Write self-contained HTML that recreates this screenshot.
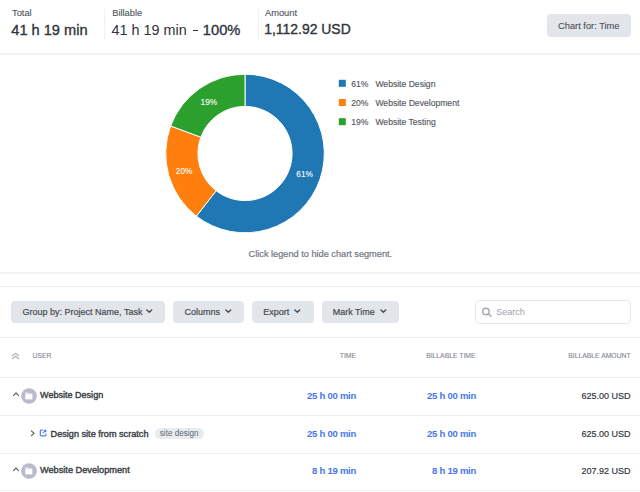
<!DOCTYPE html>
<html><head><meta charset="utf-8">
<style>
html,body{margin:0;padding:0;background:#fff;}
body{width:640px;height:492px;position:relative;overflow:hidden;font-family:"Liberation Sans",sans-serif;color:#3b3f46;}
.a{position:absolute;white-space:nowrap;line-height:1;}
.ic{position:absolute;}
.hl{position:absolute;left:0;width:640px;height:1px;background:#eceef1;}
.vl{position:absolute;width:1px;background:#eff1f4;}
.lbl{font-size:9.3px;color:#555a62;-webkit-text-stroke:0.15px currentColor;}
.val{font-size:14.4px;color:#2f333a;}
.sb{-webkit-text-stroke:0.35px currentColor;}
.btn{position:absolute;top:300.5px;height:22.5px;background:#e2e6ea;border-radius:4px;}
.bt{font-size:9px;color:#454a52;top:307.6px;-webkit-text-stroke:0.2px currentColor;}
.th{font-size:6.8px;color:#848990;top:352.8px;-webkit-text-stroke:0.12px currentColor;}
.blue{color:#4677ea;font-size:9.5px;font-weight:bold;letter-spacing:-0.25px;}
.amt{font-size:9px;color:#33373e;-webkit-text-stroke:0.18px currentColor;}
.name{font-size:9.05px;color:#3b3f46;-webkit-text-stroke:0.4px currentColor;}
</style></head>
<body>
<!-- header -->
<div class="a lbl" style="left:12px;top:8.7px;">Total</div>
<div class="a val sb" style="left:11.3px;top:22.5px;font-size:14.6px;">41 h 19 min</div>
<div class="vl" style="left:104px;top:8.5px;height:32px;"></div>
<div class="a lbl" style="left:112.2px;top:8.7px;">Billable</div>
<div class="a val" style="left:111.6px;top:22.6px;">41 h 19 min</div>
<div style="position:absolute;left:192.6px;top:29.7px;width:5.2px;height:1.6px;background:#2f333a;"></div>
<div class="a val sb" style="left:202.8px;top:22.6px;font-size:14.7px;">100%</div>
<div class="vl" style="left:257.5px;top:8.5px;height:32px;"></div>
<div class="a lbl" style="left:265px;top:8.7px;">Amount</div>
<div class="a val sb" style="left:264.2px;top:22.8px;font-size:13.95px;">1,112.92 USD</div>
<div class="btn" style="left:547px;top:13.5px;width:84px;height:23.5px;"></div>
<div class="a bt" style="left:558px;top:21.8px;font-size:9.3px;-webkit-text-stroke:0.1px currentColor;color:#4a4f57;">Chart for: Time</div>
<div class="hl" style="top:53px;height:2px;background:#f1f2f5;"></div>

<!-- chart -->
<svg style="position:absolute;left:0;top:0" width="640" height="270" viewBox="0 0 640 270">
  <path d="M245.00 74.20A79.3 79.3 0 1 1 196.40 216.16L216.13 190.72A47.1 47.1 0 1 0 245.00 106.40Z" fill="#1f77b4" stroke="#fff" stroke-width="1"/>
  <path d="M196.40 216.16A79.3 79.3 0 0 1 170.63 125.99L200.83 137.16A47.1 47.1 0 0 0 216.13 190.72Z" fill="#ff7f0e" stroke="#fff" stroke-width="1"/>
  <path d="M170.63 125.99A79.3 79.3 0 0 1 245.00 74.20L245.00 106.40A47.1 47.1 0 0 0 200.83 137.16Z" fill="#2ca02c" stroke="#fff" stroke-width="1"/>
  <g font-family="Liberation Sans" font-size="9" fill="#fff" stroke="#fff" stroke-width="0.1" text-anchor="middle">
    <text transform="translate(304.6 177.3) scale(0.92 1.1)">61%</text>
    <text transform="translate(184.1 174.1) scale(0.92 1.1)">20%</text>
    <text transform="translate(208.8 105.4) scale(0.92 1.1)">19%</text>
  </g>
  <rect x="338.8" y="79.8" width="7" height="7" fill="#1f77b4"/>
  <rect x="338.8" y="99" width="7" height="7" fill="#ff7f0e"/>
  <rect x="338.8" y="118.2" width="7" height="7" fill="#2ca02c"/>
  <g font-family="Liberation Sans" font-size="8.6" fill="#555a62" stroke="#555a62" stroke-width="0.15">
    <text x="368.5" y="86.7" text-anchor="end">61%</text>
    <text x="375.4" y="86.7">Website Design</text>
    <text x="368.5" y="105.9" text-anchor="end">20%</text>
    <text x="375.4" y="105.9">Website Development</text>
    <text x="368.5" y="125.1" text-anchor="end">19%</text>
    <text x="375.4" y="125.1">Website Testing</text>
  </g>
  <text x="248.6" y="256.7" font-family="Liberation Sans" font-size="9.2" fill="#71767d" stroke="#71767d" stroke-width="0.2">Click legend to hide chart segment.</text>
</svg>
<div class="hl" style="top:272px;height:2px;background:#f3f4f6;"></div>
<div class="hl" style="top:286px;"></div>

<!-- toolbar -->
<div class="btn" style="left:11.25px;width:153.75px;"></div>
<div class="a bt" style="left:22.5px;">Group by: Project Name, Task</div>
<svg class="ic" style="left:145.5px;top:309px" width="7" height="5" viewBox="0 0 7 5"><polyline points="0.9,1 3.3,3.3 5.7,1" fill="none" stroke="#454a52" stroke-width="1.4" stroke-linecap="round" stroke-linejoin="round"/></svg>
<div class="btn" style="left:173px;width:71px;"></div>
<div class="a bt" style="left:184.4px;">Columns</div>
<svg class="ic" style="left:225px;top:309px" width="7" height="5" viewBox="0 0 7 5"><polyline points="0.9,1 3.3,3.3 5.7,1" fill="none" stroke="#454a52" stroke-width="1.4" stroke-linecap="round" stroke-linejoin="round"/></svg>
<div class="btn" style="left:252.3px;width:61.5px;"></div>
<div class="a bt" style="left:263.3px;">Export</div>
<svg class="ic" style="left:294.3px;top:309px" width="7" height="5" viewBox="0 0 7 5"><polyline points="0.9,1 3.3,3.3 5.7,1" fill="none" stroke="#454a52" stroke-width="1.4" stroke-linecap="round" stroke-linejoin="round"/></svg>
<div class="btn" style="left:321.6px;width:77.8px;"></div>
<div class="a bt" style="left:332.7px;">Mark Time</div>
<svg class="ic" style="left:380.1px;top:309px" width="7" height="5" viewBox="0 0 7 5"><polyline points="0.9,1 3.3,3.3 5.7,1" fill="none" stroke="#454a52" stroke-width="1.4" stroke-linecap="round" stroke-linejoin="round"/></svg>
<div style="position:absolute;left:475px;top:300px;width:153.6px;height:21.6px;border:1px solid #e6e9ed;border-radius:4px;"></div>
<svg class="ic" style="left:481px;top:307px" width="12" height="11" viewBox="0 0 12 11"><circle cx="4.9" cy="4.4" r="3.2" fill="none" stroke="#a0a7b1" stroke-width="1.35"/><line x1="7.2" y1="6.8" x2="10.1" y2="9.3" stroke="#a0a7b1" stroke-width="1.5" stroke-linecap="round"/></svg>
<div class="a bt" style="left:496.3px;color:#9aa2ac;-webkit-text-stroke:0;">Search</div>
<div class="hl" style="top:337px;"></div>

<!-- table header -->
<svg class="ic" style="left:11px;top:352px" width="9" height="8" viewBox="0 0 9 8"><polyline points="1.1,4 4.5,1.3 7.9,4" fill="none" stroke="#aeb3bb" stroke-width="1.15"/><polyline points="1.1,7 4.5,4.3 7.9,7" fill="none" stroke="#aeb3bb" stroke-width="1.15"/></svg>
<div class="a th" style="left:32.6px;">USER</div>
<div class="a th" style="right:284px;">TIME</div>
<div class="a th" style="right:164.5px;">BILLABLE TIME</div>
<div class="a th" style="right:9.4px;">BILLABLE AMOUNT</div>
<div class="hl" style="top:377px;"></div>

<!-- row 1 -->
<svg class="ic" style="left:12px;top:391px" width="8" height="6" viewBox="0 0 8 6"><polyline points="1.5,4.6 4,1.9 6.5,4.6" fill="none" stroke="#51565e" stroke-width="1.05" stroke-linecap="round" stroke-linejoin="round"/></svg>
<svg class="ic" style="left:21.35px;top:388.3px" width="16" height="16" viewBox="0 0 16 16"><circle cx="8" cy="8" r="7.85" fill="#b7bbcd"/><path d="M4.25 4.5h2.7l0.8 0.8h3.6v0.5H4.25z" fill="#fff" opacity="0.85"/><path d="M4.25 6.1h7.1v5.3h-7.1z" fill="#fff"/></svg>
<div class="a name" style="left:40px;top:391px;">Website Design</div>
<div class="a blue" style="right:283.95px;top:391.3px;">25 h 00 min</div>
<div class="a blue" style="right:163.95px;top:391.3px;">25 h 00 min</div>
<div class="a amt" style="right:9.6px;top:392px;">625.00 USD</div>
<div class="hl" style="top:415px;"></div>

<!-- row 2 -->
<svg class="ic" style="left:30px;top:429.7px" width="6" height="7" viewBox="0 0 6 7"><polyline points="1.4,0.9 4.1,3.3 1.4,5.7" fill="none" stroke="#51565e" stroke-width="1.1" stroke-linecap="round" stroke-linejoin="round"/></svg>
<svg class="ic" style="left:39px;top:428.5px" width="8" height="8" viewBox="0 0 8 8"><path d="M3.3 1.1H2.2Q1.3 1.1 1.3 2V5.9Q1.3 6.8 2.2 6.8H6.1Q7 6.8 7 5.9V4.9" fill="none" stroke="#4a7cf0" stroke-width="1.15" stroke-linecap="round"/><path d="M4.1 3.9L6.6 1.4M5.3 1.2H6.8V2.7" fill="none" stroke="#4a7cf0" stroke-width="1.15" stroke-linecap="round" stroke-linejoin="round"/></svg>
<div class="a name" style="left:50.6px;top:429.5px;font-size:9.15px;">Design site from scratch</div>
<div style="position:absolute;left:154.6px;top:427.7px;width:49.3px;height:11.2px;border-radius:6px;background:#e9ecef;"></div>
<div class="a" style="left:159.8px;top:430.2px;font-size:8.15px;color:#686d75;-webkit-text-stroke:0.05px currentColor;">site design</div>
<div class="a blue" style="right:283.95px;top:428.9px;">25 h 00 min</div>
<div class="a blue" style="right:163.95px;top:428.9px;">25 h 00 min</div>
<div class="a amt" style="right:9.6px;top:430px;">625.00 USD</div>
<div class="hl" style="top:452.5px;"></div>

<!-- row 3 -->
<svg class="ic" style="left:12px;top:465.5px" width="8" height="6" viewBox="0 0 8 6"><polyline points="1.5,4.6 4,1.9 6.5,4.6" fill="none" stroke="#51565e" stroke-width="1.05" stroke-linecap="round" stroke-linejoin="round"/></svg>
<svg class="ic" style="left:21.35px;top:463px" width="16" height="16" viewBox="0 0 16 16"><circle cx="8" cy="8" r="7.85" fill="#b7bbcd"/><path d="M4.25 4.5h2.7l0.8 0.8h3.6v0.5H4.25z" fill="#fff" opacity="0.85"/><path d="M4.25 6.1h7.1v5.3h-7.1z" fill="#fff"/></svg>
<div class="a name" style="left:40px;top:466px;font-size:9.2px;">Website Development</div>
<div class="a blue" style="right:283.95px;top:466.4px;">8 h 19 min</div>
<div class="a blue" style="right:163.95px;top:466.4px;">8 h 19 min</div>
<div class="a amt" style="right:9.6px;top:467px;">207.92 USD</div>
<div class="hl" style="top:489.5px;"></div>
</body></html>
